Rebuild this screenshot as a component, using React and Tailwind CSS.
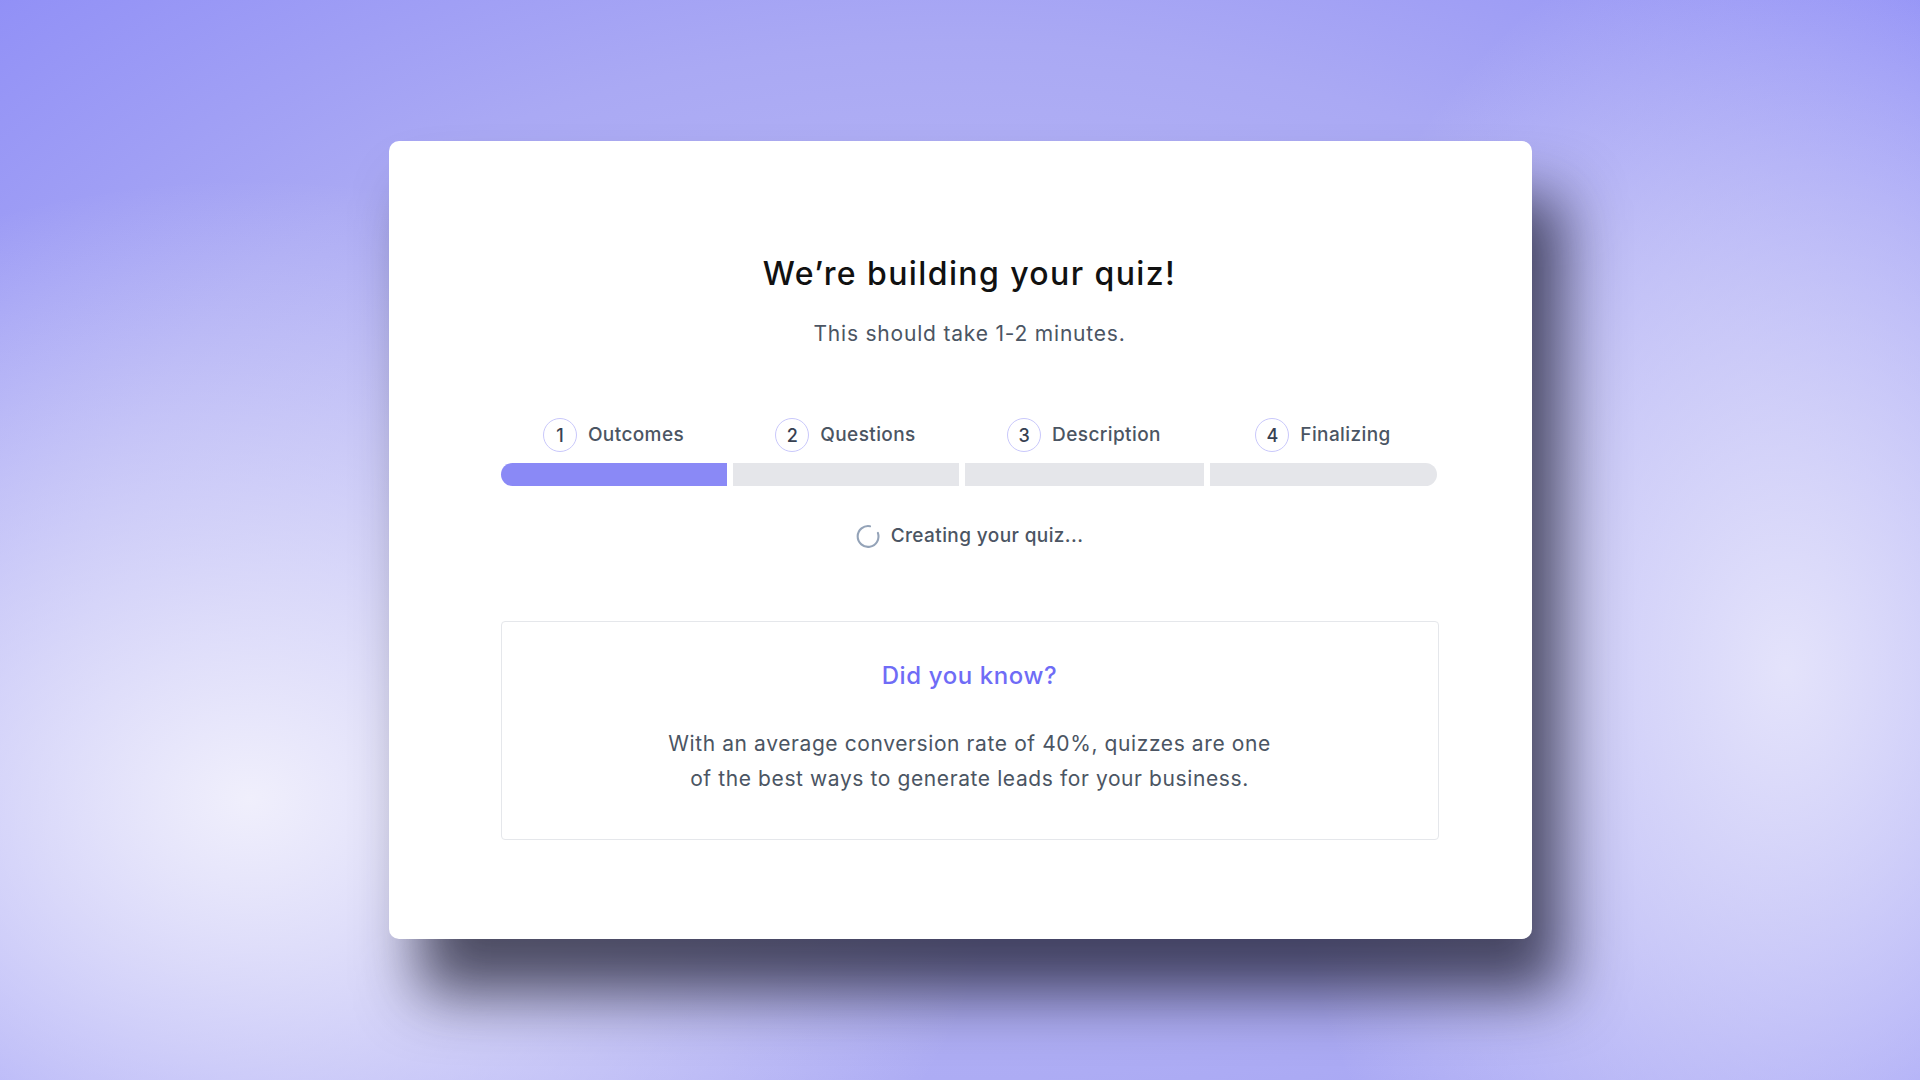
import React from "react";

const steps = [
  { n: 1, label: "Outcomes", w: "w-[226px]", active: true, cls: "rounded-l-full" },
  { n: 2, label: "Questions", w: "w-[226px]", active: false, cls: "" },
  { n: 3, label: "Description", w: "w-[239px]", active: false, cls: "" },
  { n: 4, label: "Finalizing", w: "w-[227px]", active: false, cls: "rounded-r-full" },
];

function Spinner() {
  return (
    <svg width="25" height="25" viewBox="0 0 24 24" fill="none">
      <path
        d="M21 8.5 A10 10 0 1 1 13.5 2.1"
        stroke="#94a3b8"
        strokeWidth="2"
        strokeLinecap="round"
      />
    </svg>
  );
}

export default function App() {
  return (
    <div
      className="min-h-screen w-full flex items-center justify-center bg-[#9d9cf5] bg-[radial-gradient(ellipse_760px_620px_at_13%_74%,rgba(240,239,252,1)_0%,rgba(240,239,252,0)_100%),radial-gradient(ellipse_520px_760px_at_93%_62%,rgba(228,227,251,1)_0%,rgba(228,227,251,0)_100%),radial-gradient(ellipse_75%_85%_at_50%_55%,#c3c2f5_0%,#aaa9f4_60%,#8c8bf7_100%)]"
      style={{ fontFamily: "Inter, 'Noto Sans', sans-serif" }}
    >
      <div className="w-[1143px] h-[798px] bg-white rounded-[10px] shadow-[30px_55px_60px_rgba(22,22,40,0.72)] pl-[112px] pr-[93px] pt-[113px] flex flex-col items-stretch">
        <h1 className="text-center text-[32px] leading-[40px] font-medium text-[#111111] tracking-[1.4px]">
          We’re building your quiz!
        </h1>
        <p className="mt-[26px] text-center text-[21px] leading-[28px] text-[#4b5563] tracking-[0.8px]">
          This should take 1-2 minutes.
        </p>

        <div className="mt-[70px] flex gap-[6px]">
          {steps.map((s) => (
            <div key={s.n} className={`${s.w} flex flex-col items-center`}>
              <div className="h-[34px] flex items-center gap-[11px]">
                <div className="w-[34px] h-[34px] rounded-full border-[1.5px] border-[#c9c8fb] flex items-center justify-center text-[18px] font-medium text-[#374151]">
                  {s.n}
                </div>
                <span className="text-[19px] font-medium text-[#4b5563] tracking-[0.4px]">{s.label}</span>
              </div>
              <div
                className={`mt-[11px] h-[23px] w-full ${s.cls} ${
                  s.active ? "bg-[#8a89f6]" : "bg-[#e5e6ea]"
                }`}
              />
            </div>
          ))}
        </div>

        <div className="mt-[38px] h-[24px] flex items-center justify-center gap-[10px]">
          <Spinner />
          <span className="text-[19px] font-medium text-[#4b5563] tracking-[0.4px]">Creating your quiz...</span>
        </div>

        <div className="mt-[73px] h-[219px] border border-[#e5e7eb] rounded-[4px] flex flex-col items-center pt-[38px]">
          <h2 className="text-[24px] leading-[32px] font-medium text-[#6f6cf6] tracking-[0.6px]">Did you know?</h2>
          <p className="mt-[34px] text-center text-[21px] leading-[35px] text-[#4b5563] tracking-[0.6px]">
            <span className="block">With an average conversion rate of 40%, quizzes are one</span>
            <span className="block">of the best ways to generate leads for your business.</span>
          </p>
        </div>
      </div>
    </div>
  );
}
